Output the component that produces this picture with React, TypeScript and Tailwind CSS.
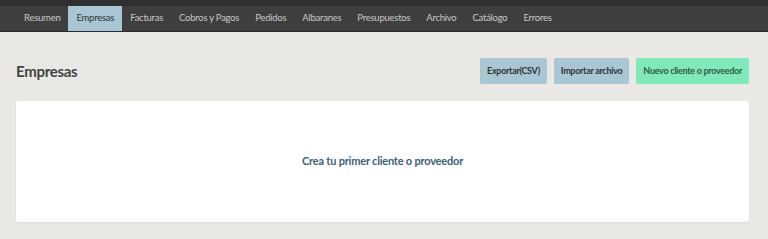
const NAV = [
  'Resumen',
  'Empresas',
  'Facturas',
  'Cobros y Pagos',
  'Pedidos',
  'Albaranes',
  'Presupuestos',
  'Archivo',
  'Catálogo',
  'Errores',
]

export default function App() {
  return (
    <div className="min-h-screen bg-[#e9e8e4] font-['Lato','Noto_Sans',sans-serif]">
      {/* Top bar */}
      <div className="h-[6px] bg-[#2f2f2f]" />
      <nav className="flex h-[26px] border-b border-[#2a2a2a] bg-[#3e3e3e] px-4">
        {NAV.map((item) => (
          <a
            key={item}
            className={
              item === 'Empresas'
                ? 'flex items-center bg-[#a9c6d4] px-2 text-[9.5px] tracking-[-0.25px] text-[#333]'
                : 'flex items-center px-2 text-[9.5px] tracking-[-0.25px] text-[#c8c8c8]'
            }
          >
            {item}
          </a>
        ))}
      </nav>

      <main className="pl-4 pr-[19px]">
        <div className="flex items-center justify-between pt-[26px] pb-[17px]">
          <h1 className="text-[15px] font-bold tracking-[-0.3px] text-[#444]">Empresas</h1>
          <div className="flex gap-[7px]">
            <button className="h-[26px] rounded-[2px] bg-[#a9c6d4] px-[7px] text-[9px] font-bold tracking-[-0.3px] text-[#333]">
              Exportar(CSV)
            </button>
            <button className="h-[26px] rounded-[2px] bg-[#a9c6d4] px-[7px] text-[9px] font-bold tracking-[-0.3px] text-[#333]">
              Importar archivo
            </button>
            <button className="h-[26px] rounded-[2px] bg-[#80e9b9] px-[7px] text-[9px] font-bold tracking-[-0.3px] text-[#2f5b46]">
              Nuevo cliente o proveedor
            </button>
          </div>
        </div>

        <section className="flex h-[121px] items-center justify-center rounded-[2px] bg-white shadow-[0_1px_2px_rgba(0,0,0,0.06)]">
          <p className="text-[11px] font-bold tracking-[-0.2px] text-[#3e6078]">Crea tu primer cliente o proveedor</p>
        </section>
      </main>
    </div>
  )
}
